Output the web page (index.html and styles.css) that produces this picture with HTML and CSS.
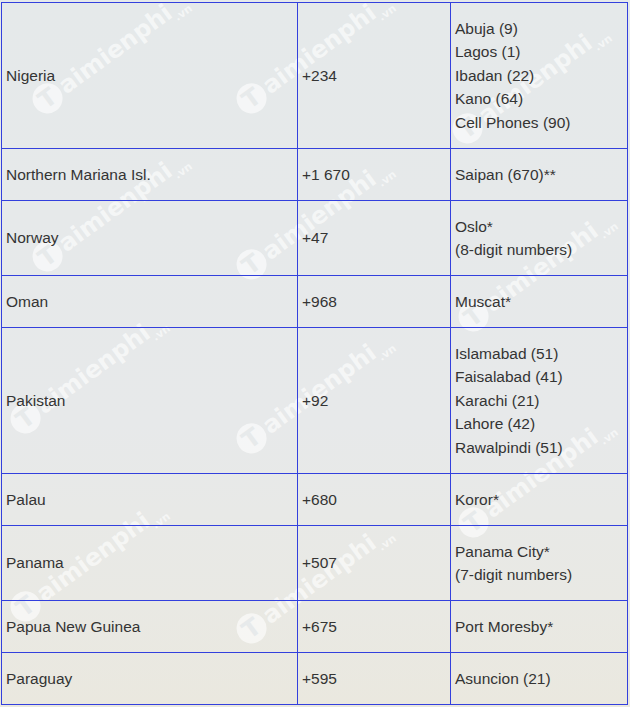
FILE: index.html
```html
<!DOCTYPE html>
<html>
<head>
<meta charset="utf-8">
<link rel="stylesheet" href="styles.css">
</head>
<body>
<div class="page">
  <div class="marks" aria-hidden="true">
    <span class="wm w1"><i>T</i>aimienphi<sub>.vn</sub></span>
    <span class="wm w2"><i>T</i>aimienphi<sub>.vn</sub></span>
    <span class="wm w3"><i>T</i>aimienphi<sub>.vn</sub></span>
    <span class="wm w4"><i>T</i>aimienphi<sub>.vn</sub></span>
    <span class="wm w5"><i>T</i>aimienphi<sub>.vn</sub></span>
    <span class="wm w6"><i>T</i>aimienphi<sub>.vn</sub></span>
    <span class="wm w7"><i>T</i>aimienphi<sub>.vn</sub></span>
    <span class="wm w8"><i>T</i>aimienphi<sub>.vn</sub></span>
    <span class="wm w9"><i>T</i>aimienphi<sub>.vn</sub></span>
    <span class="wm w10"><i>T</i>aimienphi<sub>.vn</sub></span>
    <span class="wm w11"><i>T</i>aimienphi<sub>.vn</sub></span>
  </div>
  <table class="codes">
    <colgroup>
      <col class="c1"><col class="c2"><col class="c3">
    </colgroup>
    <tr class="r5"><td>Nigeria</td><td>+234</td><td>Abuja (9)<br>Lagos (1)<br>Ibadan (22)<br>Kano (64)<br>Cell Phones (90)</td></tr>
    <tr class="r1"><td>Northern Mariana Isl.</td><td>+1 670</td><td>Saipan (670)**</td></tr>
    <tr class="r2"><td>Norway</td><td>+47</td><td>Oslo*<br>(8-digit numbers)</td></tr>
    <tr class="r1"><td>Oman</td><td>+968</td><td>Muscat*</td></tr>
    <tr class="r5"><td>Pakistan</td><td>+92</td><td>Islamabad (51)<br>Faisalabad (41)<br>Karachi (21)<br>Lahore (42)<br>Rawalpindi (51)</td></tr>
    <tr class="r1"><td>Palau</td><td>+680</td><td>Koror*</td></tr>
    <tr class="r2"><td>Panama</td><td>+507</td><td>Panama City*<br>(7-digit numbers)</td></tr>
    <tr class="r1"><td>Papua New Guinea</td><td>+675</td><td>Port Moresby*</td></tr>
    <tr class="r1"><td>Paraguay</td><td>+595</td><td>Asuncion (21)</td></tr>
  </table>
</div>
</body>
</html>
```
FILE: styles.css
```css
html, body {
  margin: 0;
  padding: 0;
  background: #e7eaeb;
}
body {
  width: 630px;
  height: 707px;
  overflow: hidden;
}
.page {
  position: relative;
  padding: 2px 0 0 1px;
  background: linear-gradient(180deg, #e5e9ea 0%, #e7e9ea 60%, #e9e9e4 85%, #eae8df 100%);
  height: 705px;
}
.codes {
  position: relative;
  z-index: 1;
  border-collapse: collapse;
  width: 627px;
  table-layout: fixed;
  font-family: "Liberation Sans", Arial, sans-serif;
  font-size: 15.5px;
  color: #343434;
}
.c1 { width: 296px; }
.c2 { width: 153px; }
.c3 { width: 177px; }
.codes td {
  border: 1px solid #3340dd;
  padding: 0 4px;
  line-height: 23.4px;
  vertical-align: middle;
}
.r5 { height: 146px; }
.r2 { height: 75px; }
.r1 { height: 52px; }
.marks {
  position: absolute;
  inset: 0;
  z-index: 0;
  pointer-events: none;
  overflow: hidden;
}
.wm {
  position: absolute;
  font-family: "DejaVu Sans", sans-serif;
  font-weight: bold;
  font-size: 24px;
  color: rgba(255, 255, 255, 0.6);
  transform: rotate(-36deg);
  transform-origin: left center;
  white-space: nowrap;
}
.wm i {
  font-style: normal;
  display: inline-block;
  width: 30px;
  height: 30px;
  line-height: 30px;
  text-align: center;
  border-radius: 50%;
  background: rgba(255, 255, 255, 0.6);
  color: #e7eaeb;
  margin-right: 2px;
}
.wm sub {
  font-size: 11px;
  vertical-align: -6px;
}
.w1 { left: 36px; top: 92px; }
.w2 { left: 240px; top: 92px; }
.w3 { left: 456px; top: 122px; }
.w4 { left: 36px; top: 250px; }
.w5 { left: 240px; top: 258px; }
.w6 { left: 462px; top: 310px; }
.w7 { left: 14px; top: 412px; }
.w8 { left: 240px; top: 432px; }
.w9 { left: 462px; top: 516px; }
.w10 { left: 14px; top: 600px; }
.w11 { left: 240px; top: 622px; }
```
